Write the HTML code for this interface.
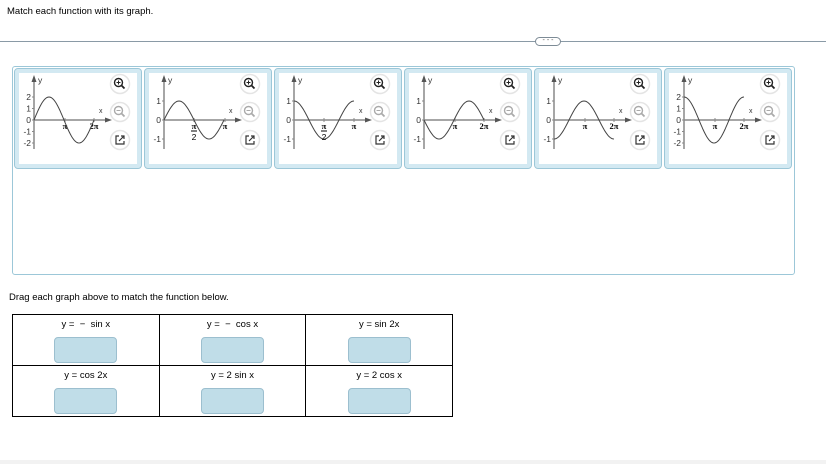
<!DOCTYPE html>
<html><head><meta charset="utf-8"><style>
body{margin:0;width:826px;height:464px;background:#fff;font-family:"Liberation Sans",Arial,sans-serif;position:relative;overflow:hidden;color:#000}
.t{position:absolute;font-size:9.5px}
.hr{position:absolute;left:0;top:41px;width:826px;height:1px;background:#8a9aa6}
.pill{position:absolute;left:535px;top:37px;width:24px;height:7px;border:1px solid #7d8b96;border-radius:5px;background:#fff;font-size:7px;line-height:5px;text-align:center;color:#555}
.outer{position:absolute;left:12px;top:66px;width:781px;height:207px;border:1px solid #9cc7d8;border-radius:3px}
.card{position:absolute;top:69px;width:118px;height:91px;border:4px solid #d3e9f2;outline:1px solid #9cc7d8;border-radius:3px;background:#fff}
.card svg{position:absolute;left:-4px;top:-4px}
table{position:absolute;left:12px;top:314px;border-collapse:collapse;table-layout:fixed;width:441px}
td{border:1px solid #000;height:50px;padding:0;text-align:center;vertical-align:top;font-size:9.5px}
td div.l{margin-top:4px}
td div.b{width:61px;height:24px;margin:7px auto 0;background:#c0dde8;border:1px solid #9cbfcf;border-radius:4px}
.bot{position:absolute;left:0;top:460px;width:826px;height:4px;background:#f2f2f2}
</style></head><body>
<div class="t" style="left:7px;top:6px">Match each function with its graph.</div>
<div class="hr"></div><div class="pill">- - -</div>
<div class="outer"></div>
<div id="cards"></div>
<div class="t" style="left:9px;top:292px">Drag each graph above to match the function below.</div>
<table>
<tr><td><div class="l">y = &nbsp;−&nbsp; sin x</div><div class="b"></div></td><td><div class="l">y = &nbsp;−&nbsp; cos x</div><div class="b"></div></td><td><div class="l">y = sin 2x</div><div class="b"></div></td></tr>
<tr><td><div class="l">y = cos 2x</div><div class="b"></div></td><td><div class="l">y = 2 sin x</div><div class="b"></div></td><td><div class="l">y = 2 cos x</div><div class="b"></div></td></tr>
</table>
<div class="bot"></div>
<script>
var specs=[
 {f:function(t){return 2*Math.sin(t)},a:2,d:2,ticks:[[50,"π"],[79,"2π"]]},
 {f:function(t){return Math.sin(2*t)},a:1,d:1,ticks:[[49,"π/2"],[80,"π"]]},
 {f:function(t){return Math.cos(2*t)},a:1,d:1,ticks:[[49,"π/2"],[79,"π"]]},
 {f:function(t){return -Math.sin(t)},a:1,d:2,ticks:[[50,"π"],[79,"2π"]]},
 {f:function(t){return -Math.cos(t)},a:1,d:2,ticks:[[50,"π"],[79,"2π"]]},
 {f:function(t){return 2*Math.cos(t)},a:2,d:2,ticks:[[50,"π"],[79,"2π"]]}
];
var xs=[14,144,274,404,534,664],h="";
specs.forEach(function(s,i){
 var sc=s.a==2?11.5:19,oy=51,ox=19,pts=[];
 for(var k=0;k<=60;k++){var t=k/60*s.d*Math.PI;pts.push((ox+k).toFixed(1)+","+(oy-s.f(t)*sc).toFixed(1));}
 var g='<svg width="126" height="99" font-family="Liberation Sans,Arial" font-size="8.5">';
 g+='<line x1="19" y1="9" x2="19" y2="80" stroke="#888" stroke-width="1.5"/><polygon points="19,6 16.5,13 21.5,13" fill="#555"/>';
 g+='<line x1="19" y1="51" x2="92" y2="51" stroke="#888" stroke-width="1.5"/><polygon points="97,51 90,48.5 90,53.5" fill="#555"/>';
 g+='<text x="23" y="14" fill="#333">y</text><text x="84" y="44" font-size="7" fill="#333">x</text>';
 var lab=s.a==2?[2,1,0,-1,-2]:[1,0,-1];
 lab.forEach(function(v){var y=oy-v*sc;g+='<line x1="17" y1="'+y+'" x2="19" y2="'+y+'" stroke="#888"/><text x="16" y="'+(y+3)+'" text-anchor="end" fill="#333">'+v+'</text>';});
 s.ticks.forEach(function(tk){
  g+='<line x1="'+tk[0]+'" y1="49" x2="'+tk[0]+'" y2="53" stroke="#888"/>';
  if(tk[1]=="π/2"){g+='<text x="'+tk[0]+'" y="60" text-anchor="middle" font-weight="bold" font-family="Liberation Serif">π</text><line x1="'+(tk[0]-3)+'" y1="62" x2="'+(tk[0]+3)+'" y2="62" stroke="#000"/><text x="'+tk[0]+'" y="71" text-anchor="middle">2</text>';}
  else g+='<text x="'+tk[0]+'" y="60" text-anchor="middle" font-weight="bold" font-family="Liberation Serif">'+tk[1]+'</text>';
 });
 g+='<polyline points="'+pts.join(" ")+'" fill="none" stroke="#444" stroke-width="1"/>';
 [[105,15,"#222",1],[105,43,"#aaa",0],[105,71,"#333",2]].forEach(function(b){
  g+='<circle cx="'+b[0]+'" cy="'+b[1]+'" r="9.5" fill="#fff" stroke="#e4e4e4" stroke-width="1.5"/>';
  if(b[3]<2){g+='<circle cx="'+(b[0]-1.5)+'" cy="'+(b[1]-1.5)+'" r="4" fill="none" stroke="'+b[2]+'" stroke-width="1.4"/><line x1="'+(b[0]+1.3)+'" y1="'+(b[1]+1.3)+'" x2="'+(b[0]+4.5)+'" y2="'+(b[1]+4.5)+'" stroke="'+b[2]+'" stroke-width="1.8"/><line x1="'+(b[0]-3.5)+'" y1="'+(b[1]-1.5)+'" x2="'+(b[0]+0.5)+'" y2="'+(b[1]-1.5)+'" stroke="'+b[2]+'" stroke-width="1"/>';
   if(b[3]==1)g+='<line x1="'+(b[0]-1.5)+'" y1="'+(b[1]-3.5)+'" x2="'+(b[0]-1.5)+'" y2="'+(b[1]+0.5)+'" stroke="'+b[2]+'" stroke-width="1"/>';}
  else g+='<path d="M'+(b[0]-1)+' '+(b[1]-4)+'H'+(b[0]-4)+'V'+(b[1]+4)+'H'+(b[0]+4)+'V'+(b[1]+1)+'M'+(b[0]-1)+' '+(b[1]+1)+'L'+(b[0]+4)+' '+(b[1]-4)+'M'+(b[0]+1)+' '+(b[1]-4)+'H'+(b[0]+4)+'V'+(b[1]-1)+'" fill="none" stroke="#333" stroke-width="1.2"/>';
 });
 g+='</svg>';
 h+='<div class="card" style="left:'+(xs[i]+1)+'px">'+g+'</div>';
});
document.getElementById("cards").innerHTML=h;
</script>
</body></html>
